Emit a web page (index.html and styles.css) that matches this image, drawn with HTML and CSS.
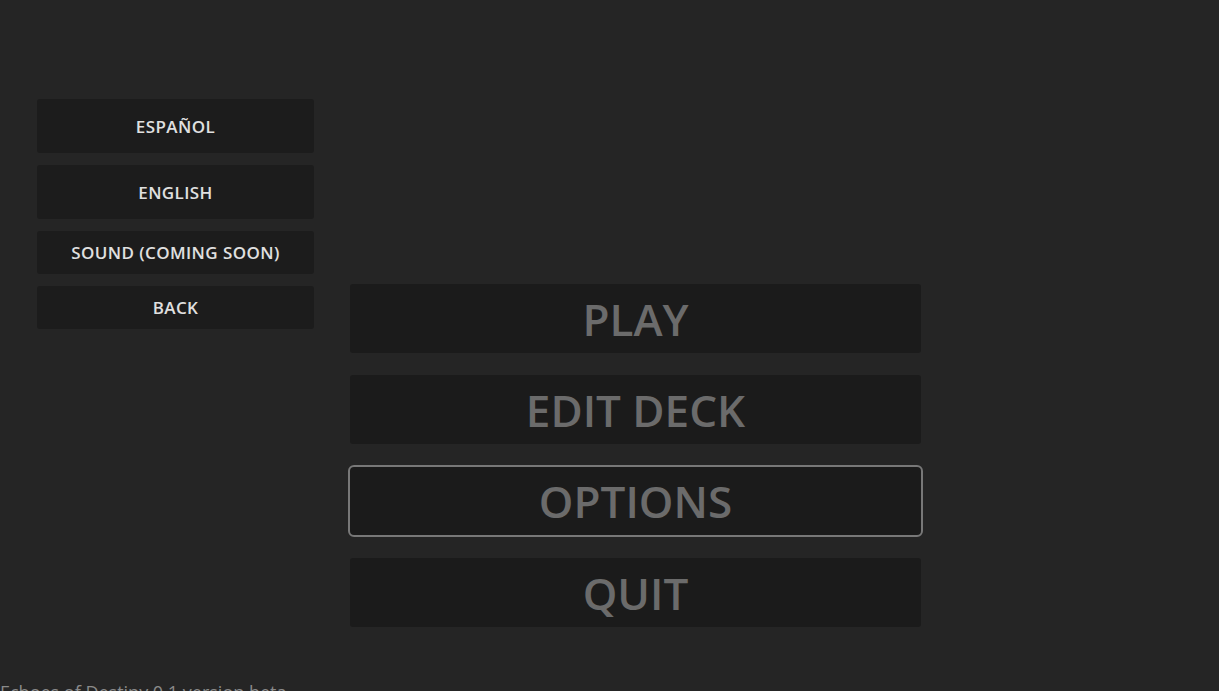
FILE: index.html
```html
<!DOCTYPE html>
<html lang="en">
<head>
<meta charset="utf-8">
<title>Echoes of Destiny</title>
<link rel="stylesheet" href="styles.css">
</head>
<body>
<div class="screen">
  <div class="stage">
    <nav class="options-panel">
      <button class="small-btn tall">ESPAÑOL</button>
      <button class="small-btn tall">ENGLISH</button>
      <button class="small-btn">SOUND (COMING SOON)</button>
      <button class="small-btn">BACK</button>
    </nav>
    <nav class="main-menu">
      <button class="main-btn">PLAY</button>
      <button class="main-btn">EDIT DECK</button>
      <button class="main-btn focused">OPTIONS</button>
      <button class="main-btn">QUIT</button>
    </nav>
  </div>
  <footer class="version">Echoes of Destiny 0.1 version beta</footer>
</div>
</body>
</html>
```
FILE: styles.css
```css
html, body {
  margin: 0;
  padding: 0;
  height: 100%;
  background: #252525;
  overflow: hidden;
}
body {
  font-family: "Open Sans", "Noto Sans", sans-serif;
}
.screen {
  height: 691px;
  display: flex;
  flex-direction: column;
}
.stage {
  display: flex;
  align-items: flex-start;
  padding-left: 37px;
  height: 680px;
  flex: none;
}
.options-panel {
  width: 277px;
  margin-top: 99px;
  display: flex;
  flex-direction: column;
  gap: 12px;
}
.small-btn {
  height: 43px;
  border: none;
  border-radius: 3px;
  background: #1c1c1c;
  color: #e0e0e0;
  font-family: inherit;
  font-weight: 600;
  font-size: 17px;
  letter-spacing: 0.4px;
  padding: 0;
  margin: 0;
}
.small-btn.tall {
  height: 54px;
}
.main-menu {
  width: 571px;
  margin-left: 36px;
  margin-top: 284px;
  display: flex;
  flex-direction: column;
  gap: 22px;
}
.main-btn {
  height: 69px;
  border: none;
  border-radius: 3px;
  background: #1b1b1b;
  color: #6b6b6b;
  font-family: inherit;
  font-weight: 600;
  font-size: 44px;
  padding: 0;
  margin: 0;
}
.main-btn.focused {
  outline: 2px solid #787878;
  outline-offset: 0;
  border-radius: 4px;
  height: 68px;
  margin: 1px 0;
}
.version {
  color: #8a8a8a;
  font-size: 18px;
  line-height: 24px;
  white-space: nowrap;
}
```
